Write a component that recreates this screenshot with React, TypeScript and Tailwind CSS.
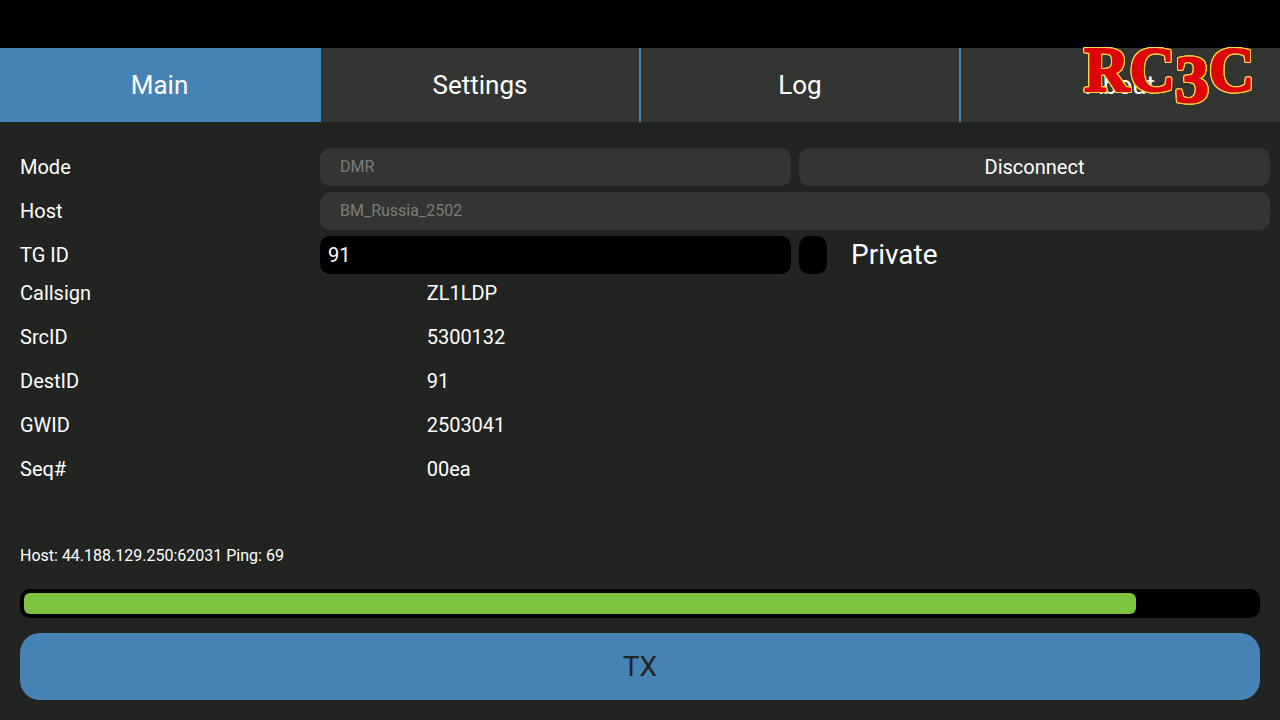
import React, { useState } from 'react';

const tabs = ['Main', 'Settings', 'Log', 'About'];

const callInfo = [
  { label: 'Callsign', value: 'ZL1LDP' },
  { label: 'SrcID', value: '5300132' },
  { label: 'DestID', value: '91' },
  { label: 'GWID', value: '2503041' },
  { label: 'Seq#', value: '00ea' },
];

// Red lettering with a thin yellow outline; the 3 hangs below the baseline
const Logo: React.FC = () => (
  <svg
    className="absolute right-6 top-8 h-20 w-44 overflow-visible pointer-events-none [filter:drop-shadow(1px_0_#ffd640)_drop-shadow(-1px_0_#ffd640)_drop-shadow(0_1px_#ffd640)_drop-shadow(0_-1px_#ffd640)]"
    viewBox="0 0 176 80"
    role="img"
    aria-label="RC3C"
  >
    <text
      x="4"
      y="59"
      fontFamily="'Liberation Serif', serif"
      fontWeight="700"
      fontSize="63"
      fill="#dd0505"
      stroke="#dd0505"
      strokeWidth="2"
      strokeLinejoin="round"
    >
      RC
      <tspan dy="11" fontSize="68">
        3
      </tspan>
      <tspan dy="-11">C</tspan>
    </text>
  </svg>
);

const App: React.FC = () => {
  const [activeTab, setActiveTab] = useState('Main');
  const [tgid, setTgid] = useState('91');
  const [isPrivate, setIsPrivate] = useState(false);
  const level = 1112 / 1232;

  return (
    <div className="relative min-h-screen flex flex-col bg-[#222421] text-white text-xl font-[Roboto,sans-serif]">
      {/* Status bar */}
      <div className="h-12 bg-black" />

      {/* Tabs */}
      <nav className="grid grid-cols-4">
        {tabs.map((tab) => (
          <button
            key={tab}
            type="button"
            onClick={() => setActiveTab(tab)}
            className={`h-[74px] text-[26px] border-x border-[#4682b4] first:border-l-0 last:border-r-0 ${
              activeTab === tab ? 'bg-[#4682b4]' : 'bg-[#333532]'
            }`}
          >
            {tab}
          </button>
        ))}
      </nav>
      <Logo />

      {/* Connection settings */}
      <main className="flex-grow flex flex-col pt-[26px] pb-5">
        <div className="flex flex-col gap-1.5 pr-2.5">
          <div className="flex items-center">
            <label htmlFor="mode" className="w-80 pl-5">
              Mode
            </label>
            <div className="flex-1 grid grid-cols-2 gap-2">
              <select
                id="mode"
                disabled
                className="appearance-none h-[38px] px-5 rounded-[10px] bg-[#333532] text-base text-[#7b7d7a] opacity-100"
              >
                <option>DMR</option>
              </select>
              <button type="button" className="h-[38px] rounded-[10px] bg-[#333532]">
                Disconnect
              </button>
            </div>
          </div>

          <div className="flex items-center">
            <label htmlFor="host" className="w-80 pl-5">
              Host
            </label>
            <select
              id="host"
              disabled
              className="flex-1 appearance-none h-[38px] px-5 rounded-[10px] bg-[#333532] text-base text-[#7b7d7a] opacity-100"
            >
              <option>BM_Russia_2502</option>
            </select>
          </div>

          <div className="flex items-center">
            <label htmlFor="tgid" className="w-80 pl-5">
              TG ID
            </label>
            <div className="flex-1 grid grid-cols-2 gap-2">
              <input
                id="tgid"
                type="text"
                value={tgid}
                onChange={(e) => setTgid(e.target.value)}
                className="min-w-0 h-[38px] px-2 rounded-[10px] bg-black outline-none"
              />
              <div className="flex items-center gap-6">
                <input
                  id="private"
                  type="checkbox"
                  checked={isPrivate}
                  onChange={(e) => setIsPrivate(e.target.checked)}
                  className="appearance-none w-7 h-[38px] rounded-[10px] bg-black checked:bg-[#4682b4]"
                />
                <label htmlFor="private" className="text-[28px] leading-8">
                  Private
                </label>
              </div>
            </div>
          </div>
        </div>

        {/* Current call */}
        <dl className="flex flex-col gap-1.5">
          {callInfo.map(({ label, value }) => (
            <div key={label} className="flex items-center h-[38px]">
              <dt className="w-1/3 pl-5">{label}</dt>
              <dd>{value}</dd>
            </div>
          ))}
        </dl>

        <div className="mt-auto px-5">
          <p className="text-base">Host: 44.188.129.250:62031 Ping: 69</p>

          {/* Audio level */}
          <div
            role="progressbar"
            aria-label="Audio level"
            aria-valuenow={Math.round(level * 100)}
            className="mt-[21px] h-[29px] p-1 rounded-[10px] bg-black"
          >
            <div className="h-full rounded-md bg-[#7cc33f]" style={{ width: `${level * 100}%` }} />
          </div>

          <button
            type="button"
            className="mt-[15px] w-full h-[67px] rounded-[20px] bg-[#4682b4] text-[28px] text-[#222421]"
          >
            TX
          </button>
        </div>
      </main>
    </div>
  );
};

export default App;
